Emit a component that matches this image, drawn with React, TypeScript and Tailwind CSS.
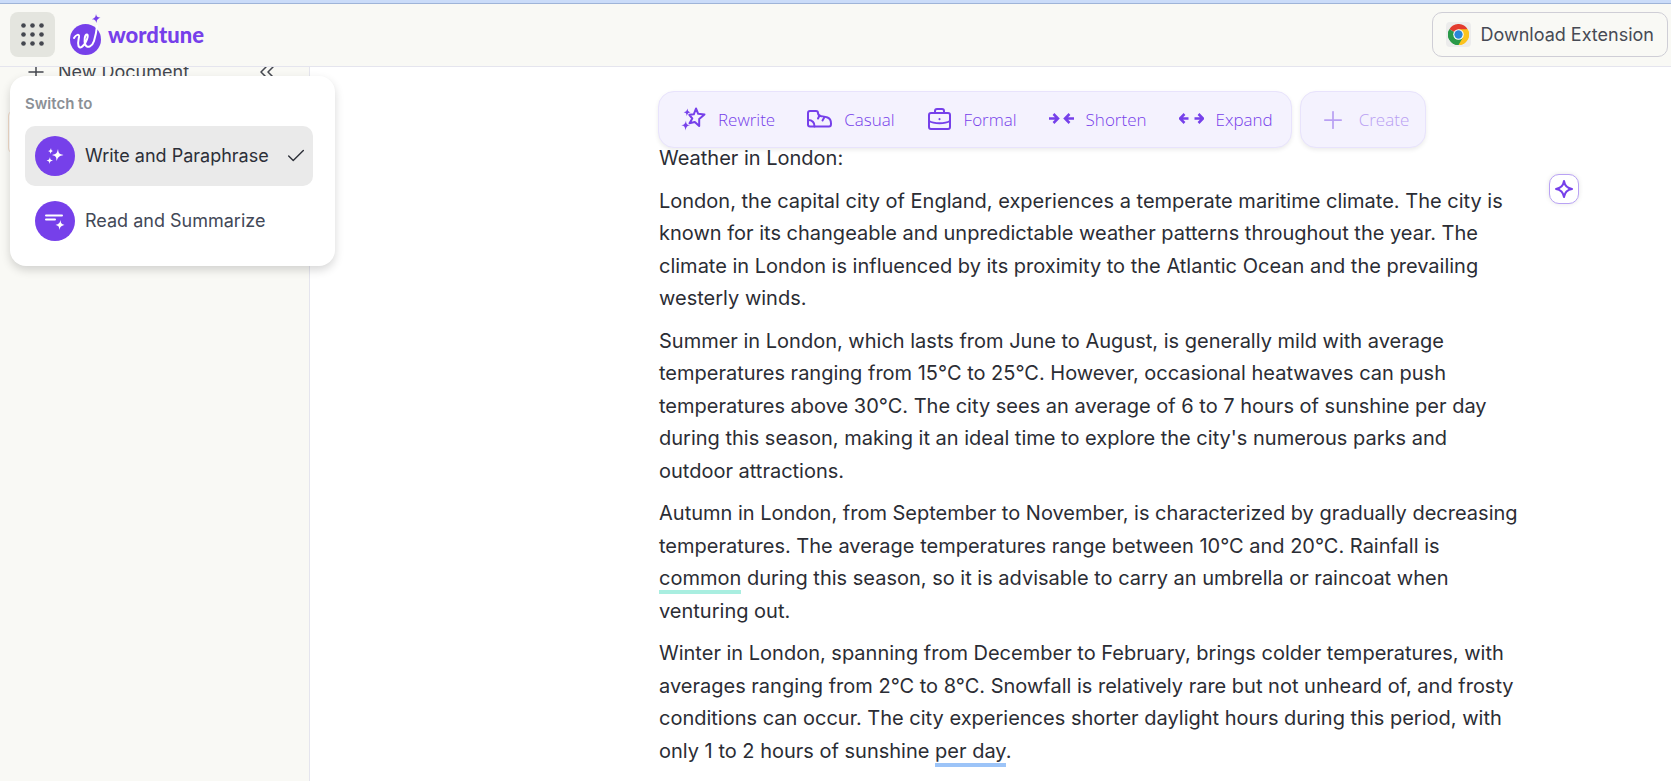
import { useState } from "react";
import { Check, ChevronsLeft, Plus } from "lucide-react";

const ACTIONS = [
  { label: "Rewrite", icon: RewriteIcon },
  { label: "Casual", icon: ShoeIcon },
  { label: "Formal", icon: BriefcaseIcon },
  { label: "Shorten", icon: ShortenIcon },
  { label: "Expand", icon: ExpandIcon },
];

const PRODUCTS = [
  { id: "write", label: "Write and Paraphrase", icon: SparklesGlyph },
  { id: "read", label: "Read and Summarize", icon: SummaryGlyph },
];

function Logo() {
  return (
    <svg width="34" height="42" viewBox="0 0 34 42" fill="none" aria-hidden="true">
      <circle cx="15.5" cy="25.5" r="15.5" fill="#7640ea" />
      <path d="M24.500 8L31 8L31 18L26.500 14Z" fill="#f9f9f5" />
      <path
        d="M4 24C6 20.500 9.500 19.500 9 23C8.500 26 7.500 29 8.500 32C10 35.500 13.500 32 15.500 28.500C17.500 25 18.500 21 17 20.500C15 20 13.500 27 15.500 31C17.500 35 22.500 32 24 27C25.500 22 26.500 17 27 12"
        stroke="#fff"
        strokeWidth="2"
        strokeLinecap="round"
        strokeLinejoin="round"
      />
      <path
        d="M26 0C26.700 2.700 27.300 3.300 30.500 3.800C27.500 4.800 27 5.500 26.500 9C25.500 6 24.800 5.500 22 5.200C25 4 25.500 3 26 0Z"
        fill="#7640ea"
      />
    </svg>
  );
}

function GridIcon() {
  return (
    <svg width="23" height="23" viewBox="0 0 23 23" fill="#44474f" aria-hidden="true">
      {[2.5, 11.5, 20.5].map((y) =>
        [2.5, 11.5, 20.5].map((x) => <circle key={`${x}-${y}`} cx={x} cy={y} r="2.3" />)
      )}
    </svg>
  );
}

function ChromeIcon() {
  return (
    <svg width="21" height="21" viewBox="0 0 48 48" aria-hidden="true">
      <path d="M24 24 L3.200 12 A24 24 0 0 1 44.800 12 Z" fill="#e33b2e" />
      <path d="M24 24 L44.800 12 A24 24 0 0 1 24 48 Z" fill="#fcc31e" />
      <path d="M24 24 L24 48 A24 24 0 0 1 3.200 12 Z" fill="#2a9a48" />
      <path d="M24 12 H44.800 A24 24 0 0 1 24 48 L34.400 30 Z" fill="#fcc31e" />
      <path d="M13.600 30 L3.200 12 A24 24 0 0 0 24 48 L34.400 30 Z" fill="#2a9a48" />
      <circle cx="24" cy="24" r="12" fill="#fff" />
      <circle cx="24" cy="24" r="9.500" fill="#2a86d8" />
    </svg>
  );
}

function SparklesGlyph() {
  return (
    <svg width="18" height="18" viewBox="0 0 18 18" fill="#fff" aria-hidden="true">
      <path d="M12 2C12.500 6 13 7 17.500 8C13 9 12 10 10.500 14C10.500 10 10 9 6 8C10.500 7 11 6 12 2Z" />
      <path d="M5 1C5.200 3 5.500 3.700 7.500 4C5.500 4.400 5 5 4.300 7C4.200 5 4 4.500 2 4C4 3.600 4.400 3 5 1Z" />
      <path d="M4 10C4.200 12.300 4.500 13 7 13.500C4.500 14 4 14.800 3.300 17C3.200 14.800 3 14 .5 13.500C3 13 3.300 12.300 4 10Z" />
    </svg>
  );
}

function SummaryGlyph() {
  return (
    <svg width="22" height="18" viewBox="0 0 22 18" fill="none" aria-hidden="true">
      <path d="M2 3.500H18M2 7.500H11" stroke="#fff" strokeWidth="2" strokeLinecap="round" />
      <path
        d="M16.500 8C16.800 11 17.300 12 20.500 13C17.300 13.800 16.500 14.500 15.300 18C15.200 14.800 14.800 13.800 11.500 13C15 12 15.700 11 16.500 8Z"
        fill="#fff"
      />
    </svg>
  );
}

function RewriteIcon() {
  return (
    <svg width="25" height="25" viewBox="0 0 25 25" fill="none" aria-hidden="true">
      <path
        d="M15 1.500L17.200 6.800L23.500 7.500L18.200 12L18.200 19L13.800 15L8.500 16.200L11.300 11.500L8.300 7.800L12.800 7.300Z"
        stroke="#7640ea"
        strokeWidth="2"
        strokeLinejoin="round"
      />
      <path
        d="M6.500 1.500C6.700 4 7.200 4.700 9.500 5.300C7.200 5.800 6.700 6.500 5.700 9C5.500 6.500 5 5.800 2.700 5.300C5 4.800 5.700 4 6.500 1.500ZM5 13.500C5.200 17 5.800 17.600 9 18.300C5.800 19 5.500 20 4.300 23.500C4.200 20 3.500 19 .3 18.300C3.500 17.600 4 17 5 13.500Z"
        fill="#7640ea"
      />
    </svg>
  );
}

function ShoeIcon() {
  return (
    <svg
      width="25"
      height="25"
      viewBox="0 0 25 25"
      fill="none"
      stroke="#7640ea"
      strokeWidth="2"
      strokeLinecap="round"
      strokeLinejoin="round"
      aria-hidden="true"
    >
      <path d="M1 6C1 4.500 1.500 4 3 4H9C10.500 4 11 4.500 11 6C11 7.500 12 8.500 13.500 9C16 9.500 18 9.500 20.500 10.500C23 11.500 24 13.500 24 16.500V17C24 19 23.500 19.500 22 19.500H3C1.500 19.500 1 19 1 17.500Z" />
      <path d="M1 13C5 13 7.500 15.500 7.500 19.500M12.500 8.500L11 11.500M17.500 10L15.500 13.500" />
    </svg>
  );
}

function BriefcaseIcon() {
  return (
    <svg
      width="25"
      height="25"
      viewBox="0 0 25 25"
      fill="none"
      stroke="#7640ea"
      strokeWidth="2"
      strokeLinecap="round"
      strokeLinejoin="round"
      aria-hidden="true"
    >
      <rect x="2" y="6" width="21" height="16" rx="2" />
      <path d="M8 6V4C8 2.500 8.500 2 10 2H15C16.500 2 17 2.500 17 4V6M2 14C7 17 18 17 23 14M12.500 12V12.200" />
    </svg>
  );
}

function ShortenIcon() {
  return (
    <svg width="25" height="25" viewBox="0 0 25 25" fill="none" stroke="#7640ea" strokeWidth="2.5" aria-hidden="true">
      <path d="M0 11.500H8M4.500 7L9 11.500L4.500 16M25 11.500H17M20.500 7L16 11.500L20.500 16" />
    </svg>
  );
}

function ExpandIcon() {
  return (
    <svg width="25" height="25" viewBox="0 0 25 25" fill="none" stroke="#7640ea" strokeWidth="2.5" aria-hidden="true">
      <path d="M9.500 11.500H1.500M5.500 7L1 11.500L5.500 16M15.500 11.500H23.500M19.500 7L24 11.500L19.500 16" />
    </svg>
  );
}

function SwitchMenu() {
  const [active, setActive] = useState("write");

  return (
    <div className="absolute top-full left-0 z-30 mt-[19px] w-[325px] rounded-2xl bg-white pt-4 pr-[22px] pb-[15px] pl-[15px] shadow-[0_4px_10px_rgba(0,0,0,0.16)]">
      <p className="mb-[10px] text-[15px] leading-6 font-semibold text-[#8b9096]">Switch to</p>
      <div className="flex flex-col gap-[5px]">
        {PRODUCTS.map(({ id, label, icon: Icon }) => (
          <button
            key={id}
            onClick={() => setActive(id)}
            className={`flex h-[60px] items-center gap-[10px] rounded-[10px] pr-[6px] pl-[10px] text-left text-lg ${
              active === id ? "bg-[#eaeaea] text-[#2c2f38]" : "text-[#424857]"
            }`}
          >
            <span className="flex size-10 shrink-0 items-center justify-center rounded-full bg-[#7640ea]">
              <Icon />
            </span>
            <span className="flex-1 whitespace-nowrap">{label}</span>
            {active === id && <Check className="size-[22px] shrink-0" strokeWidth={1.5} />}
          </button>
        ))}
      </div>
    </div>
  );
}

function Header() {
  const [open, setOpen] = useState(true);

  return (
    <header className="sticky top-0 z-20 border-b border-[#e5e5ee] bg-[#f9f9f5]">
      <div className="h-1 border-b border-[#9fb4d8] bg-[#cbdcf9]" />
      <div className="flex items-center justify-between pt-2 pr-[3px] pb-[9px] pl-[10px]">
        <div className="flex items-center gap-[15px]">
          <div className="relative">
            <button
              aria-label="Switch product"
              onClick={() => setOpen(!open)}
              className="flex size-[45px] items-center justify-center rounded-lg bg-[#e4e5df]"
            >
              <GridIcon />
            </button>
            {open && <SwitchMenu />}
          </div>
          <a href="#" className="flex items-center gap-1">
            <Logo />
            <span className="font-[Lato] text-[22px] leading-8 font-black text-[#7640ea]">wordtune</span>
          </a>
        </div>
        <button className="flex h-[45px] items-center gap-[10px] rounded-[10px] border border-[#cfced6] px-[13px] text-lg text-[#474a54]">
          <span className="flex size-[25px] items-center justify-center rounded bg-[#ececec]">
            <ChromeIcon />
          </span>
          Download Extension
        </button>
      </div>
    </header>
  );
}

function Sidebar() {
  return (
    <aside className="w-[310px] shrink-0 overflow-hidden border-r border-[#e5e5ee] bg-[#f9f9f5]">
      <div className="-mt-[9px] flex h-7 items-center pr-[30px] pl-6">
        <button className="flex items-center gap-[10px] text-lg text-[#44474f]">
          <Plus className="size-6" strokeWidth={1.5} />
          New Document
        </button>
        <button aria-label="Collapse sidebar" className="ml-auto text-[#44474f]">
          <ChevronsLeft className="size-6" strokeWidth={1.5} />
        </button>
      </div>
      <div className="mx-2 mt-6 h-11 rounded-md border border-[#f0d9c6] bg-white" />
    </aside>
  );
}

function Toolbar() {
  return (
    <div className="sticky top-0 z-10 flex gap-2 font-['Open_Sans',sans-serif] text-[17px] font-light text-[#7640ea]">
      <div className="flex h-[57px] items-center gap-8 rounded-2xl border border-[#e8e3fc] bg-[#f4f2fe] pr-[18px] pl-[22px] shadow-[0_2px_4px_rgba(0,0,0,0.08)]">
        {ACTIONS.map(({ label, icon: Icon }) => (
          <button key={label} className="flex items-center gap-3">
            <Icon />
            {label}
          </button>
        ))}
      </div>
      <button
        disabled
        className="flex h-[57px] items-center gap-3 rounded-2xl border border-[#e8e3fc] bg-[#f4f2fe] pr-4 pl-[18px] text-[#b9a0f3] shadow-[0_2px_4px_rgba(0,0,0,0.08)]"
      >
        <Plus className="size-7" strokeWidth={1.5} />
        Create
      </button>
    </div>
  );
}

export default function App() {
  return (
    <div className="flex h-screen flex-col overflow-hidden bg-white font-[Inter,sans-serif]">
      <Header />
      <div className="flex min-h-0 flex-1">
        <Sidebar />
        <main className="flex flex-1 items-start gap-[27px] overflow-hidden pt-6 pl-[348px]">
          <div className="w-[864px] shrink-0">
            <Toolbar />
            <article className="-mt-[6px] flex flex-col gap-[10px] pr-1 pl-px text-xl leading-relaxed text-[#2b2d34]">
              <p>Weather in London:</p>
              <p>
                London, the capital city of England, experiences a temperate maritime climate. The city is known
                for its changeable and unpredictable weather patterns throughout the year. The climate in London
                is influenced by its proximity to the Atlantic Ocean and the prevailing westerly winds.
              </p>
              <p>
                Summer in London, which lasts from June to August, is generally mild with average temperatures
                ranging from 15°C to 25°C. However, occasional heatwaves can push temperatures above 30°C. The
                city sees an average of 6 to 7 hours of sunshine per day during this season, making it an ideal
                time to explore the city's numerous parks and outdoor attractions.
              </p>
              <p>
                Autumn in London, from September to November, is characterized by gradually decreasing
                temperatures. The average temperatures range between 10°C and 20°C. Rainfall is{" "}
                <span className="border-b-4 border-[#a9eee0]">common</span> during this season, so it is
                advisable to carry an umbrella or raincoat when venturing out.
              </p>
              <p>
                Winter in London, spanning from December to February, brings colder temperatures, with averages
                ranging from 2°C to 8°C. Snowfall is relatively rare but not unheard of, and frosty conditions
                can occur. The city experiences shorter daylight hours during this period, with only 1 to 2
                hours of sunshine <span className="border-b-4 border-[#9cc4f8]">per day</span>.
              </p>
            </article>
          </div>
          <button
            aria-label="Suggestions"
            className="mt-[83px] flex size-[30px] shrink-0 items-center justify-center rounded-[10px] border border-[#b9a2f4] bg-white shadow-[0_0_5px_rgba(0,0,0,0.1)]"
          >
            <svg width="20" height="20" viewBox="0 0 20 20" fill="none" aria-hidden="true">
              <path
                d="M10 2C10.800 7 13 9.200 18 10C13 10.800 10.800 13 10 18C9.200 13 7 10.800 2 10C7 9.200 9.200 7 10 2Z"
                stroke="#7640ea"
                strokeWidth="2"
                strokeLinejoin="round"
              />
            </svg>
          </button>
        </main>
      </div>
    </div>
  );
}
